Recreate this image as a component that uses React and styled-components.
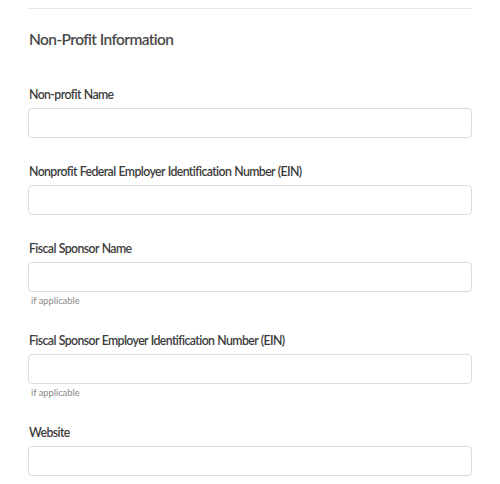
import styled, { createGlobalStyle } from "styled-components";

const fields = [
  { label: "Non-profit Name" },
  { label: "Nonprofit Federal Employer Identification Number (EIN)" },
  { label: "Fiscal Sponsor Name", hint: "if applicable" },
  { label: "Fiscal Sponsor Employer Identification Number (EIN)", hint: "if applicable" },
  { label: "Website" },
];

export default function App() {
  return (
    <Page>
      <GlobalStyle />
      <Divider />
      <Heading>Non-Profit Information</Heading>
      <Fields>
        {fields.map((f) => (
          <Field key={f.label}>
            <Label>{f.label}</Label>
            <Input type="text" />
            {f.hint && <Hint>{f.hint}</Hint>}
          </Field>
        ))}
      </Fields>
    </Page>
  );
}

const GlobalStyle = createGlobalStyle`
body {
  margin: 0;
  background: #fff;
  font-family: Lato, "Open Sans", sans-serif;
}
`

const Page = styled.div`
padding: 8px 28px 0 28px;
`

const Divider = styled.div`
height: 0;
border-top: 1px solid #e8e8e8;
`

const Heading = styled.h2`
margin: 21px 0 38px 1px;
font-size: 15.5px;
line-height: 18px;
font-weight: 600;
letter-spacing: -0.6px;
color: #4a4a4a;
`

const Fields = styled.div`
display: flex;
flex-direction: column;
gap: 25px;
`

const Field = styled.div`
display: flex;
flex-direction: column;
`

const Label = styled.label`
font-size: 12.3px;
line-height: 16px;
font-weight: 600;
letter-spacing: -0.6px;
word-spacing: 0.5px;
color: #3c3c3c;
margin: 1px 0 5px 1px;
`

const Input = styled.input`
box-sizing: border-box;
width: 100%;
height: 30px;
border: 1.5px solid #dcdcdc;
border-radius: 4px;
background: #fff;
outline: none;
`

const Hint = styled.div`
margin: 3px 0 0 3px;
font-size: 9.3px;
line-height: 12px;
color: #888;
`
